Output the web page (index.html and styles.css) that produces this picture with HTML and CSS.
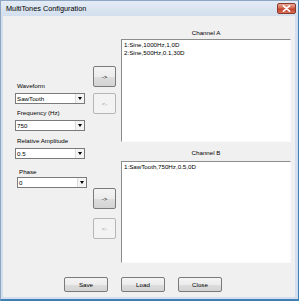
FILE: index.html
```html
<!DOCTYPE html>
<html lang="en">
<head>
    <meta charset="UTF-8">
    <title>MultiTones Configuration</title>
    <link rel="stylesheet" href="styles.css">
</head>
<body>

    <!-- Janela do dialogo -->
    <div class="window">
        <div class="titlebar">
            <span class="title">MultiTones Configuration</span>
            <span class="close-btn">
                <svg width="9" height="7" viewBox="0 0 9 7">
                    <path d="M1.5 0.8 L7.5 6.2 M7.5 0.8 L1.5 6.2" stroke="#fff" stroke-width="1.6" stroke-linecap="round"/>
                </svg>
            </span>
        </div>

        <div class="client">
            <div class="main">
                <!-- Parametros do tom -->
                <div class="params">
                    <label class="lbl">Waveform</label>
                    <div class="combo"><span>SawTooth</span><span class="arrow"></span></div>

                    <label class="lbl lbl-freq">Frequency (Hz)</label>
                    <div class="combo"><span>750</span><span class="arrow"></span></div>

                    <label class="lbl lbl-amp">Relative Amplitude</label>
                    <div class="combo"><span>0.5</span><span class="arrow"></span></div>

                    <div class="phase">
                        <label class="lbl">Phase</label>
                        <div class="combo"><span>0</span><span class="arrow"></span></div>
                    </div>
                </div>

                <!-- Botoes de mover -->
                <div class="moves">
                    <button class="btn mv">-&gt;</button>
                    <button class="btn mv mv-gap" disabled>&lt;-</button>
                    <button class="btn mv mv-b">-&gt;</button>
                    <button class="btn mv mv-gap2" disabled>&lt;-</button>
                </div>

                <!-- Canais -->
                <div class="channels">
                    <div class="ch-label">Channel A</div>
                    <div class="listbox list-a">
                        <div>1:Sine,1000Hz,1,0D</div>
                        <div>2:Sine,500Hz,0.1,30D</div>
                    </div>
                    <div class="ch-label ch-b">Channel B</div>
                    <div class="listbox list-b">
                        <div>1:SawTooth,750Hz,0.5,0D</div>
                    </div>
                </div>
            </div>

            <div class="footer">
                <button class="btn foot">Save</button>
                <button class="btn foot">Load</button>
                <button class="btn foot">Close</button>
            </div>
        </div>
    </div>

</body>
</html>
```

FILE: styles.css
```css
* {
    box-sizing: border-box;
}

body {
    margin: 0;
    background: #fff;
    font-family: "Liberation Sans", Arial, sans-serif;
}

/* Moldura da janela */
.window {
    width: 299px;
    height: 301px;
    border: 1px solid #8fa6c2;
    border-right-color: #3f7fb3;
    border-bottom: 2px solid #3f7fb3;
    background: #d3dfee;
    display: flex;
    flex-direction: column;
}

.titlebar {
    height: 15px;
    display: flex;
    align-items: center;
    padding-left: 5px;
    position: relative;
    background: linear-gradient(to bottom, #e3ebf5, #d3dfee);
}

.title {
    font-size: 7.3px;
    color: #000;
}

.close-btn {
    position: absolute;
    right: 2px;
    top: 2px;
    width: 19px;
    height: 11px;
    border: 1px solid #8a3a2c;
    border-radius: 2px;
    background: linear-gradient(to bottom, #e7a896, #d46a52 45%, #c0412a 55%, #d86f55);
    display: flex;
    align-items: center;
    justify-content: center;
}

.client {
    flex: 1;
    margin: 0 3px 2px 2px;
    background: #f0f0f0;
    font-size: 6.2px;
    color: #000;
}

.main {
    display: flex;
    padding-left: 12px;
}

/* Coluna dos parametros */
.params {
    width: 71px;
    margin-top: 66px;
    display: flex;
    flex-direction: column;
}

.lbl {
    display: block;
    height: 8px;
    line-height: 8px;
    padding-left: 2px;
}

.lbl-freq {
    margin-top: 5px;
}

.lbl-amp {
    margin-top: 6px;
}

.combo {
    width: 70px;
    height: 11px;
    margin-top: 3px;
    border: 1px solid #7a7a7a;
    background: #fff;
    display: flex;
    align-items: center;
    justify-content: space-between;
    padding-left: 1px;
    line-height: 9px;
}

.arrow {
    width: 9px;
    height: 9px;
    border-left: 1px solid #dcdcdc;
    background: #f4f4f4;
    position: relative;
}

.arrow::after {
    content: "";
    position: absolute;
    left: 2px;
    top: 3px;
    border-left: 2.5px solid transparent;
    border-right: 2.5px solid transparent;
    border-top: 3px solid #000;
}

.phase {
    margin-top: 9px;
    padding-left: 2px;
}

.phase .lbl {
    padding-left: 2px;
}

.phase .combo {
    margin-top: 1px;
}

/* Botoes */
.btn {
    font-family: "Liberation Sans", Arial, sans-serif;
    font-size: 6.2px;
    color: #000;
    border: 1px solid #7a7a7a;
    border-radius: 2px;
    background: linear-gradient(to bottom, #f4f4f4, #ececec 50%, #dedede 51%, #d3d3d3);
    padding: 0;
    margin: 0;
}

.btn:disabled {
    color: #9a9a9a;
    border-color: #b6b6b6;
    background: #f3f3f3;
}

.moves {
    width: 23px;
    margin-left: 7px;
    margin-top: 50px;
    display: flex;
    flex-direction: column;
}

.mv {
    width: 23px;
    height: 21px;
}

.mv-gap {
    margin-top: 6px;
}

.mv-b {
    margin-top: 74px;
}

.mv-gap2 {
    margin-top: 9px;
}

/* Listas dos canais */
.channels {
    width: 170px;
    margin-left: 5px;
    display: flex;
    flex-direction: column;
}

.ch-label {
    height: 8px;
    line-height: 8px;
    margin-top: 13px;
    text-align: center;
}

.ch-b {
    margin-top: 7px;
}

.listbox {
    margin-top: 2px;
    background: #fff;
    border-top: 1px solid #8c8c8c;
    border-left: 1px solid #8c8c8c;
    border-right: 1px solid #fafafa;
    border-bottom: 1px solid #fafafa;
    padding: 1px 0 0 2px;
    line-height: 7.7px;
}

.list-a {
    height: 103px;
}

.list-b {
    height: 102px;
    margin-top: 4px;
}

/* Rodape */
.footer {
    display: flex;
    gap: 13px;
    padding-left: 61px;
    margin-top: 14px;
}

.foot {
    width: 44px;
    height: 15px;
}
```
